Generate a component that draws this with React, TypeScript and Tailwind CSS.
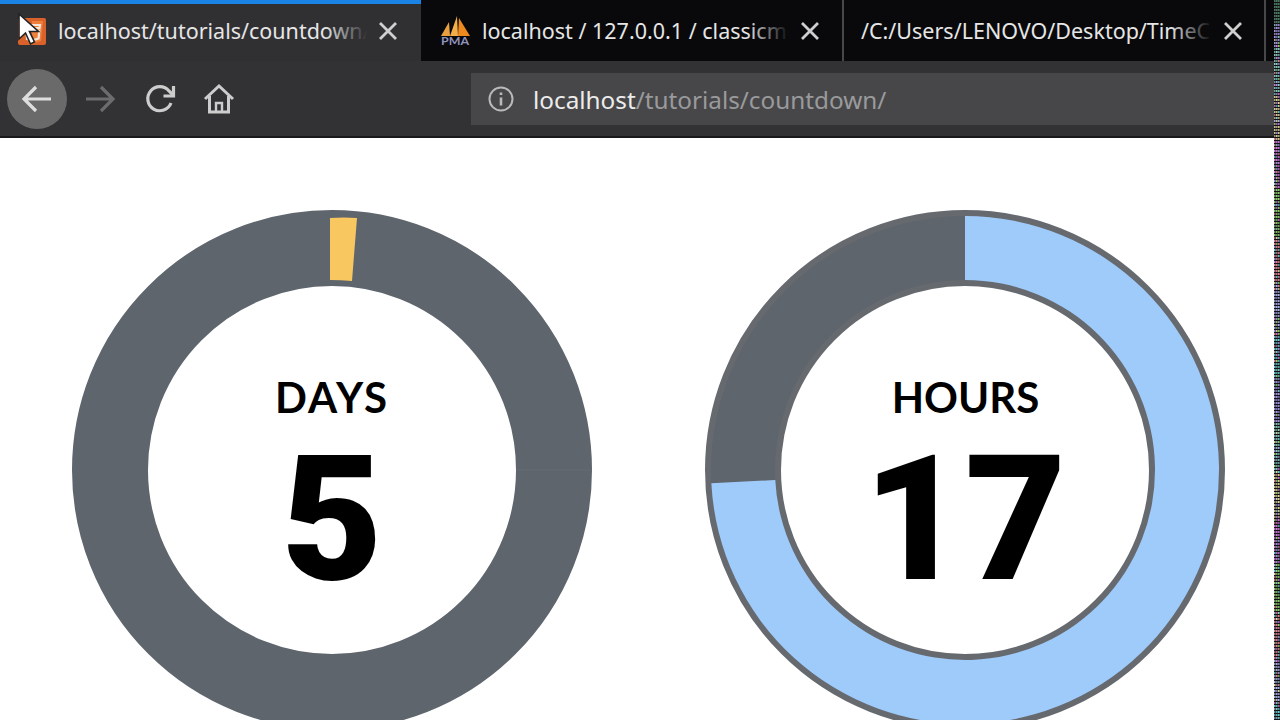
import React from "react";

const ui = { fontFamily: '"Noto Sans", "Open Sans", sans-serif' };
const label = { fontFamily: 'Lato, "Liberation Sans", sans-serif' };
const digits = { fontFamily: 'Roboto, "Liberation Sans", sans-serif' };

function polar(r: number, deg: number, c = 260) {
  const a = (deg * Math.PI) / 180;
  return [c + r * Math.sin(a), c - r * Math.cos(a)];
}

function arcPath(r1: number, r2: number, from: number, to: number) {
  const [ax, ay] = polar(r2, from);
  const [bx, by] = polar(r2, to);
  const [cx, cy] = polar(r1, to);
  const [dx, dy] = polar(r1, from);
  const large = to - from > 180 ? 1 : 0;
  return `M${ax} ${ay}A${r2} ${r2} 0 ${large} 1 ${bx} ${by}L${cx} ${cy}A${r1} ${r1} 0 ${large} 0 ${dx} ${dy}Z`;
}

function Noise() {
  const rows: React.ReactElement[] = [];
  let s = 12345;
  const rnd = () => {
    s = (s * 1103515245 + 12345) & 0x7fffffff;
    return s / 0x7fffffff;
  };
  const palettes = ["#a79be0", "#8fd0c4", "#e0d79a", "#d07fd8", "#94d070", "#e08a92", "#b0b6e8", "#70d0d0"];
  for (let y = 0; y < 720; y += 3) {
    const band = Math.floor(y / 47) % palettes.length;
    for (let x = 0; x < 6; x += 2) {
      const c = rnd() > 0.35 ? palettes[band] : palettes[Math.floor(rnd() * palettes.length)];
      rows.push(<rect key={`${x}-${y}`} x={x} y={y} width={1.6} height={2} fill={y < 24 ? "#5f9f78" : c} opacity={y < 24 ? 0.7 : 0.65 + rnd() * 0.35} />);
    }
  }
  return (
    <svg width="6" height="720" className="block bg-[#121218]">
      {rows}
    </svg>
  );
}

function Html5() {
  return (
    <svg width="30" height="30" viewBox="0 0 30 30" className="shrink-0">
      <rect x="1" y="2" width="28" height="27" rx="2" fill="#d9622b" />
      <path d="M15 5h11l-2 20-9 3z" fill="#ef7f3a" />
      <path d="M12 9h11l-.4 3h-7l.2 2.500h6.500l-.7 8L15 24.500 10 23l-.3-4h3" fill="none" stroke="#f7e6d8" strokeWidth="2.200" />
    </svg>
  );
}

function Pma() {
  return (
    <svg width="32" height="32" viewBox="0 0 32 32" className="shrink-0">
      <path d="M2 21 10 7l1 14z" fill="#e8a040" />
      <path d="M11 21 18 1l1 20z" fill="#f2ae48" />
      <path d="M19 21 20 3l11 18z" fill="#ef8a1e" />
      <text x="16" y="30" textAnchor="middle" fontSize="11" fontWeight="700" fill="#8f93bc" textLength="28" lengthAdjust="spacingAndGlyphs" style={label}>PMA</text>
    </svg>
  );
}

function CloseX() {
  return (
    <svg width="20" height="20" viewBox="0 0 20 20" className="shrink-0">
      <path d="M2 2l16 16M18 2 2 18" stroke="#cfcfcf" strokeWidth="2.800" />
    </svg>
  );
}

function Tab({ title, box, icon, fade }: { title: string; box: string; icon?: React.ReactNode; fade: string }) {
  return (
    <div className={`relative flex h-full shrink-0 items-center ${box}`}>
      {icon}
      <div className={`relative min-w-0 flex-1 overflow-hidden whitespace-nowrap text-[21.500px] leading-[30px] text-[#e6e6e6] ${icon ? "ml-[11px]" : ""}`} style={ui}>
        {title}
        <div className={`absolute inset-y-0 right-0 w-[42px] bg-gradient-to-r ${fade}`} />
      </div>
      <div className="ml-[11px]"><CloseX /></div>
    </div>
  );
}

function Ring({ name, nameClass, value, children }: { name: string; nameClass: string; value: string; children: React.ReactNode }) {
  return (
    <div className="relative h-[520px] w-[520px] shrink-0">
      <svg width="520" height="520" viewBox="0 0 520 520" className="block">
        {children}
      </svg>
      <div className="absolute inset-x-0 top-[163px] flex flex-col items-center text-black">
        <div className={`text-[42px] font-bold leading-[48px] ${nameClass}`} style={label}>{name}</div>
        <div className="mt-[19px] text-[175px] font-black leading-[160px]" style={digits}>{value}</div>
      </div>
    </div>
  );
}

export default function App() {
  return (
    <div className="relative h-[720px] w-[1280px] overflow-hidden bg-white">
      <div className="flex h-[61px] bg-[#09090b]">
        <Tab
          title="localhost/tutorials/countdown/"
          box="w-[421px] border-t-4 border-[#1a84e6] bg-[#303033] pb-[4px] pl-[17px] pr-[23px]"
          icon={<Html5 />}
          fade="from-transparent to-[#303033]"
        />
        <Tab
          title="localhost / 127.0.0.1 / classicmodels"
          box="ml-[1px] w-[422px] border-r-2 border-[#48484a] pl-[17px] pr-[22px]"
          icon={<Pma />}
          fade="from-transparent to-[#09090b]"
        />
        <Tab
          title="/C:/Users/LENOVO/Desktop/TimeCircles"
          box="w-[422px] border-r-2 border-[#48484a] pl-[17px] pr-[21px]"
          fade="from-transparent to-[#09090b]"
        />
      </div>
      <div className="flex h-[77px] items-center gap-[27px] border-b-2 border-[#19191b] bg-[#323234] pl-[7px]">
        <div className="flex h-[60px] w-[60px] items-center justify-center rounded-full bg-[#6a6a6a]">
          <svg width="32" height="28" viewBox="0 0 32 28" fill="none" stroke="#dedede" strokeWidth="3.200">
            <path d="M30 14H3M15 2 3 14l12 12" />
          </svg>
        </div>
        <svg width="32" height="28" viewBox="0 0 32 28" fill="none" stroke="#6c6c6e" strokeWidth="3.200" className="-ml-[10px]">
          <path d="M2 14h27M17 2l12 12-12 12" />
        </svg>
        <svg width="32" height="30" viewBox="0 0 32 30" fill="none" stroke="#cdcdcd" strokeWidth="3.200" className="ml-[1px]">
          <path d="M27 19a12 12 0 1 1-2-12l4 4" />
          <path d="M29.500 2v10H19.500" />
        </svg>
        <svg width="32" height="32" viewBox="0 0 32 32" fill="none" stroke="#cdcdcd" strokeWidth="3">
          <path d="M2 16 16 3l14 13" />
          <path d="M6.500 13v16h19V13" />
          <path d="M13 29v-9h6v9" strokeWidth="2.400" />
        </svg>
        <div className="ml-[209px] flex h-[52px] flex-1 items-center bg-[#474749] pl-[17px]">
          <svg width="26" height="26" viewBox="0 0 26 26" fill="none" stroke="#b9b9b9" strokeWidth="2">
            <circle cx="13" cy="13" r="11.500" />
            <path d="M13 11.500v8M13 6.500v2.500" strokeWidth="2.600" />
          </svg>
          <div className="ml-[19px] pt-[3px] text-[24.300px] leading-[32px] text-[#9a9a9c]" style={ui}>
            <span className="text-[#ececec]">localhost</span>/tutorials/countdown/
          </div>
        </div>
      </div>
      <div className="flex gap-[113px] pl-[72px] pt-[72px]">
        <Ring name="DAYS" nameClass="tracking-[2px]" value="5">
          <circle cx="260" cy="260" r="222" fill="none" stroke="#5e656d" strokeWidth="76" />
          <path d="M444 260H520" stroke="#666d75" strokeWidth="1" />
          <path d="M258 8Q272 7 285 8L280 71Q269 70 258 70Z" fill="#f8c75f" />
        </Ring>
        <Ring name="HOURS" nameClass="pl-[1px]" value="17">
          <circle cx="260" cy="260" r="222" fill="none" stroke="#666a6f" strokeWidth="76" />
          <path d={arcPath(190, 254, 267, 360)} fill="#5e656d" />
          <path d={arcPath(190, 254, 0, 267)} fill="#9fcbfb" />
        </Ring>
      </div>
      <div className="absolute right-0 top-0"><Noise /></div>
      <svg width="28" height="36" viewBox="0 0 28 36" className="absolute left-[16px] top-[12px]">
        <path d="M3 2v25l6.500-6 5 11 4-2-5-10.500h9z" fill="#fff" stroke="#222" strokeWidth="1.600" />
      </svg>
    </div>
  );
}
